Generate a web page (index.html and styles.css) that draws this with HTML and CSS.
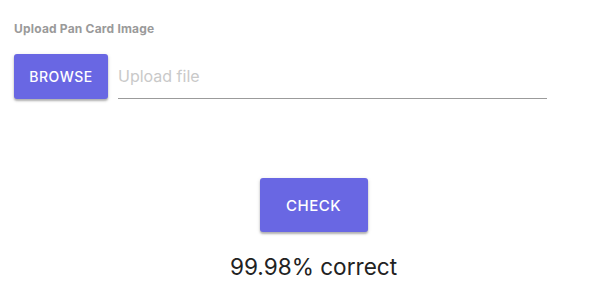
FILE: index.html
```html
<!DOCTYPE html>
<html>
<head>
<meta charset="utf-8">
<link rel="stylesheet" href="styles.css">
</head>
<body>
<div class="page">
  <div class="label">Upload Pan Card Image</div>
  <div class="upload-row">
    <button class="btn browse">BROWSE</button>
    <div class="field"><span class="placeholder">Upload file</span></div>
  </div>
  <div class="center">
    <button class="btn check">CHECK</button>
    <div class="result">99.98% correct</div>
  </div>
</div>
</body>
</html>
```
FILE: styles.css
```css
html, body {
  margin: 0;
  padding: 0;
  background: #fff;
}
body {
  font-family: Inter, "Noto Sans", sans-serif;
}
.page {
  padding: 21px 0 0 14px;
}
.label {
  font-size: 12px;
  font-weight: 700;
  color: #9a9a9a;
  line-height: 15px;
  height: 15px;
  letter-spacing: 0.2px;
}
.upload-row {
  display: flex;
  align-items: flex-end;
  margin-top: 18px;
}
.btn {
  font-family: Inter, "Noto Sans", sans-serif;
  background: #6967e3;
  color: #fff;
  border: none;
  border-radius: 3px;
  font-size: 14px;
  font-weight: 500;
  letter-spacing: 0.5px;
  box-shadow: 0 2px 2px rgba(0,0,0,0.25), 0 1px 4px rgba(0,0,0,0.12);
  padding: 0;
}
.browse {
  width: 94px;
  height: 45px;
}
.field {
  margin-left: 10px;
  width: 429px;
  height: 44px;
  border-bottom: 1px solid #9b9b9b;
  display: flex;
  align-items: center;
}
.placeholder {
  font-size: 16px;
  color: #c9c9c9;
}
.center {
  display: flex;
  flex-direction: column;
  align-items: center;
  padding-left: 6px;
  margin-top: 79px;
}
.check {
  width: 108px;
  height: 54px;
  font-size: 15px;
}
.result {
  margin-top: 21px;
  font-size: 22.6px;
  color: #222;
  line-height: 27px;
}
```
